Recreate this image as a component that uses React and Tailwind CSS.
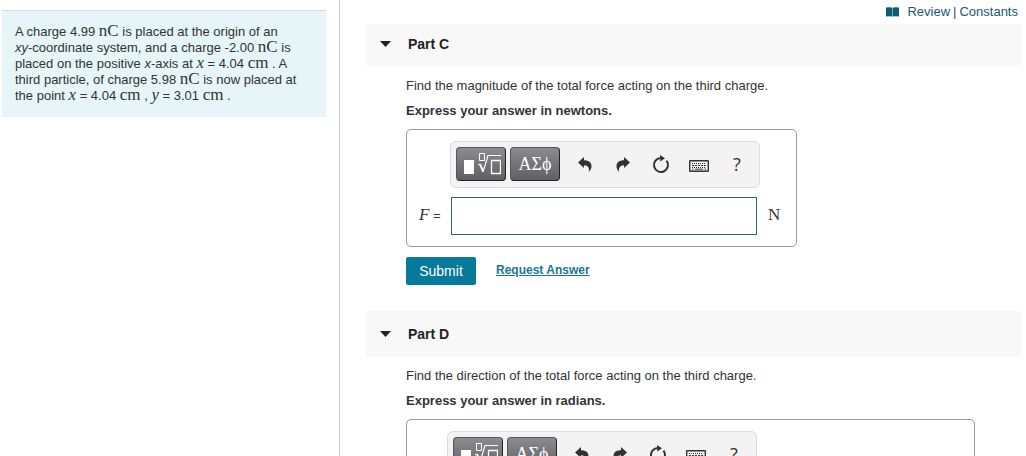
import React from "react";

const Unit = ({ children }) => (
  <span className="font-['Liberation_Serif',serif] text-[17px] leading-3.5">{children}</span>
);

const Variable = ({ children }) => (
  <i className="font-['Liberation_Serif',serif] text-[17px] leading-3.5">{children}</i>
);

function BookIcon() {
  return (
    <svg width="13" height="10" viewBox="0 0 13 10" aria-hidden="true">
      <path d="M0 0.500Q3 0 6 0.500V9.500Q3 9 0 9.500ZM7 0.500Q10 0 13 0.500V9.500Q10 9 7 9.500Z" fill="#0b5f70" />
      <path d="M6.500 1V9.500" stroke="#6fa3b5" />
    </svg>
  );
}

function TemplateIcon() {
  return (
    <svg width="40" height="26" viewBox="0 0 40 26" fill="none" stroke="#fff" aria-hidden="true">
      <path d="M3 9H13V23H3Z" fill="#fff" stroke="none" />
      <path d="M18.500 2.500H23.500V9.500H18.500Z" />
      <path d="M17 14L19 13" />
      <path d="M19 13L22 20.500" strokeWidth="2" />
      <path d="M22 21L27 4.500H40" strokeWidth="1.200" />
      <path d="M30.500 9.500H39.500V22.500H30.500Z" strokeWidth="1.300" />
    </svg>
  );
}

function ArrowIcon({ forward }) {
  return (
    <svg width="14" height="15" viewBox="0 0 14 15" className={forward ? "-scale-x-100" : ""} aria-hidden="true">
      <path d="M0 5.500L6 0V3.300C11 3.300 13.500 5.500 13.500 9.200C13.500 11.600 12.500 13.200 10.800 14.700C11.500 11 10.400 8.400 6 8.200V11Z" fill="#333" />
    </svg>
  );
}

function ResetIcon() {
  return (
    <svg width="18" height="19" viewBox="0 0 18 19" fill="none" aria-hidden="true">
      <path d="M14.500 5.700A7 7 0 1 1 8.500 3" stroke="#333" strokeWidth="2" />
      <path d="M8 0L13 3.200L8.300 6.500Z" fill="#333" />
    </svg>
  );
}

function KeyboardIcon() {
  return (
    <svg width="20" height="12" viewBox="0 0 20 12" fill="none" stroke="#333" aria-hidden="true">
      <rect x="0.700" y="0.700" width="18.600" height="10.600" rx="0.500" strokeWidth="1.400" />
      <path d="M3 3.500H17" strokeDasharray="1 1" />
      <path d="M3 5.500H17" strokeDasharray="2 1" />
      <path d="M3 7.500H17" strokeDasharray="1 1" />
      <path d="M3 9.200H4.500M6 9.200H14M15.500 9.200H17" />
    </svg>
  );
}

const darkButton =
  "flex h-[34px] w-[50px] shrink-0 items-center justify-center rounded-sm border border-[#55555a] border-r-[#222] border-b-[#222] bg-linear-to-b from-[#8b8b90] to-[#5f5f64] text-white";
const plainButton = "flex h-[34px] w-[38px] shrink-0 items-center justify-center";

function Toolbar() {
  return (
    <div className="flex h-[47px] w-[310px] items-start rounded-md border border-[#dcdcdc] bg-[#f3f3f3] pl-[5px] pt-[5px]">
      <button type="button" aria-label="Templates" className={darkButton}>
        <TemplateIcon />
      </button>
      <button
        type="button"
        aria-label="Symbols"
        className={`${darkButton} ml-1 mr-1.5 font-['Liberation_Serif',serif] text-lg`}
      >
        ΑΣϕ
      </button>
      <button type="button" aria-label="Undo" className={plainButton}>
        <ArrowIcon />
      </button>
      <button type="button" aria-label="Redo" className={plainButton}>
        <ArrowIcon forward />
      </button>
      <button type="button" aria-label="Reset" className={plainButton}>
        <ResetIcon />
      </button>
      <button type="button" aria-label="Keyboard shortcuts" className={`${plainButton} pt-1`}>
        <KeyboardIcon />
      </button>
      <button
        type="button"
        aria-label="Help"
        className={`${plainButton} font-['Open_Sans',sans-serif] text-lg text-[#333]`}
      >
        ?
      </button>
    </div>
  );
}

function PartHeader({ title, className }) {
  return (
    <h2 className={`bg-[#f8f8f8] text-sm font-bold text-[#222] ${className}`}>
      <button type="button" className="flex h-full w-full items-center gap-[17px] pl-3.5">
        <svg width="11" height="6" viewBox="0 0 11 6" aria-hidden="true">
          <path d="M0 0H11L5.500 6Z" fill="#222" />
        </svg>
        {title}
      </button>
    </h2>
  );
}

function Prompt({ question, instruction, className }) {
  return (
    <div className={`pb-2.5 leading-4 ${className}`}>
      <p>{question}</p>
      <p className="mt-[9px] font-bold">{instruction}</p>
    </div>
  );
}

export default function App() {
  return (
    <div className="flex h-screen overflow-hidden bg-white font-['Liberation_Sans',Arial,sans-serif] text-[13px] text-[#333]">
      <aside className="w-[340px] shrink-0 border-r border-[#c5d0d6] pl-0.5 pr-[13px] pt-2.5">
        <p className="border-t border-[#cfdfe0] bg-[#e6f5f7] p-[13px] leading-4">
          A charge 4.99 <Unit>nC</Unit> is placed at the origin of an
          <br />
          <i>xy</i>-coordinate system, and a charge -2.00 <Unit>nC</Unit> is
          <br />
          placed on the positive <i>x</i>-axis at <Variable>x</Variable> = 4.04 <Unit>cm</Unit> . A
          <br />
          third particle, of charge 5.98 <Unit>nC</Unit> is now placed at
          <br />
          the point <Variable>x</Variable> = 4.04 <Unit>cm</Unit> , <Variable>y</Variable> = 3.01 <Unit>cm</Unit> .
        </p>
      </aside>

      <main className="min-w-0 flex-1 pl-[26px] pr-[5px]">
        <nav className="flex h-6 items-center justify-end gap-[3px] pr-[3px] text-[#20596b]">
          <a href="#review" className="flex items-center gap-2">
            <BookIcon />
            Review
          </a>
          <span>|</span>
          <a href="#constants">Constants</a>
        </nav>

        <section>
          <PartHeader title="Part C" className="h-[42px] pb-0.5" />
          <div className="pl-10">
            <Prompt
              question="Find the magnitude of the total force acting on the third charge."
              instruction="Express your answer in newtons."
              className="pt-3"
            />
            <div className="w-[391px] rounded-[5px] border border-[#999] pb-[11px] pl-3 pt-[11px]">
              <div className="pl-[31px]">
                <Toolbar />
              </div>
              <div className="mt-[9px] flex items-center">
                <label htmlFor="force" className="w-8 shrink-0">
                  <Variable>F</Variable> =
                </label>
                <input id="force" type="text" className="h-[38px] w-[306px] border border-[#2d6a6e] bg-white px-2" />
                <span className="ml-[11px]">
                  <Unit>N</Unit>
                </span>
              </div>
            </div>
            <div className="mt-2.5 flex items-center gap-5">
              <button type="button" className="h-7 w-[70px] rounded-xs bg-[#067a9a] text-sm text-white">
                Submit
              </button>
              <a href="#answer" className="pb-0.5 text-xs font-bold text-[#1b7795] underline">
                Request Answer
              </a>
            </div>
          </div>
        </section>

        <section className="mt-[26px]">
          <PartHeader title="Part D" className="h-[46px]" />
          <div className="pl-10">
            <Prompt
              question="Find the direction of the total force acting on the third charge."
              instruction="Express your answer in radians."
              className="pt-[11px]"
            />
            <div className="mr-[46px] rounded-[5px] border border-[#999] pb-[11px] pl-10 pt-[11px]">
              <Toolbar />
            </div>
          </div>
        </section>
      </main>
    </div>
  );
}
